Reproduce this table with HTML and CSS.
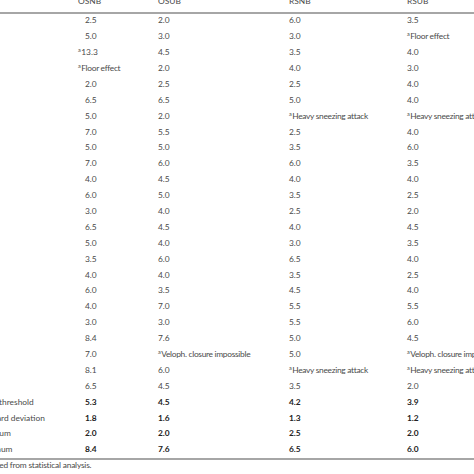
FILE: index.html
```html
<!DOCTYPE html>
<html lang="en">
<head>
<meta charset="utf-8">
<title>Nasal threshold table</title>
<link rel="stylesheet" href="styles.css">
</head>
<body>
<div class="sheet">
  <div class="row head">
    <div class="c lab"></div>
    <div class="c v2 nopad">OSNB</div>
    <div class="c">OSUB</div>
    <div class="c">RSNB</div>
    <div class="c">RSUB</div>
  </div>
  <div class="body">
    <div class="row"><div class="c lab">1</div><div class="c v2">2.5</div><div class="c">2.0</div><div class="c">6.0</div><div class="c">3.5</div></div>
    <div class="row"><div class="c lab">2</div><div class="c v2">5.0</div><div class="c">3.0</div><div class="c">3.0</div><div class="c txt"><sup class="fn">a</sup>Floor effect</div></div>
    <div class="row"><div class="c lab">3</div><div class="c v2 nopad"><sup class="fn">a</sup>13.3</div><div class="c">4.5</div><div class="c">3.5</div><div class="c">4.0</div></div>
    <div class="row"><div class="c lab">4</div><div class="c v2 nopad txt"><sup class="fn">a</sup>Floor effect</div><div class="c">2.0</div><div class="c">4.0</div><div class="c">3.0</div></div>
    <div class="row"><div class="c lab">5</div><div class="c v2">2.0</div><div class="c">2.5</div><div class="c">2.5</div><div class="c">4.0</div></div>
    <div class="row"><div class="c lab">6</div><div class="c v2">6.5</div><div class="c">6.5</div><div class="c">5.0</div><div class="c">4.0</div></div>
    <div class="row"><div class="c lab">7</div><div class="c v2">5.0</div><div class="c">2.0</div><div class="c txt"><sup class="fn">a</sup>Heavy sneezing attack</div><div class="c txt"><sup class="fn">a</sup>Heavy sneezing attack</div></div>
    <div class="row"><div class="c lab">8</div><div class="c v2">7.0</div><div class="c">5.5</div><div class="c">2.5</div><div class="c">4.0</div></div>
    <div class="row"><div class="c lab">9</div><div class="c v2">5.0</div><div class="c">5.0</div><div class="c">3.5</div><div class="c">6.0</div></div>
    <div class="row"><div class="c lab">10</div><div class="c v2">7.0</div><div class="c">6.0</div><div class="c">6.0</div><div class="c">3.5</div></div>
    <div class="row"><div class="c lab">11</div><div class="c v2">4.0</div><div class="c">4.5</div><div class="c">4.0</div><div class="c">4.0</div></div>
    <div class="row"><div class="c lab">12</div><div class="c v2">6.0</div><div class="c">5.0</div><div class="c">3.5</div><div class="c">2.5</div></div>
    <div class="row"><div class="c lab">13</div><div class="c v2">3.0</div><div class="c">4.0</div><div class="c">2.5</div><div class="c">2.0</div></div>
    <div class="row"><div class="c lab">14</div><div class="c v2">6.5</div><div class="c">4.5</div><div class="c">4.0</div><div class="c">4.5</div></div>
    <div class="row"><div class="c lab">15</div><div class="c v2">5.0</div><div class="c">4.0</div><div class="c">3.0</div><div class="c">3.5</div></div>
    <div class="row"><div class="c lab">16</div><div class="c v2">3.5</div><div class="c">6.0</div><div class="c">6.5</div><div class="c">4.0</div></div>
    <div class="row"><div class="c lab">17</div><div class="c v2">4.0</div><div class="c">4.0</div><div class="c">3.5</div><div class="c">2.5</div></div>
    <div class="row"><div class="c lab">18</div><div class="c v2">6.0</div><div class="c">3.5</div><div class="c">4.5</div><div class="c">4.0</div></div>
    <div class="row"><div class="c lab">19</div><div class="c v2">4.0</div><div class="c">7.0</div><div class="c">5.5</div><div class="c">5.5</div></div>
    <div class="row"><div class="c lab">20</div><div class="c v2">3.0</div><div class="c">3.0</div><div class="c">5.5</div><div class="c">6.0</div></div>
    <div class="row"><div class="c lab">21</div><div class="c v2">8.4</div><div class="c">7.6</div><div class="c">5.0</div><div class="c">4.5</div></div>
    <div class="row"><div class="c lab">22</div><div class="c v2">7.0</div><div class="c txt"><sup class="fn">a</sup>Veloph. closure impossible</div><div class="c">5.0</div><div class="c txt"><sup class="fn">a</sup>Veloph. closure impossible</div></div>
    <div class="row"><div class="c lab">23</div><div class="c v2">8.1</div><div class="c">6.0</div><div class="c txt"><sup class="fn">a</sup>Heavy sneezing attack</div><div class="c txt"><sup class="fn">a</sup>Heavy sneezing attack</div></div>
    <div class="row"><div class="c lab">24</div><div class="c v2">6.5</div><div class="c">4.5</div><div class="c">3.5</div><div class="c">2.0</div></div>
    <div class="row sum"><div class="c lab">Mean threshold</div><div class="c v2">5.3</div><div class="c">4.5</div><div class="c">4.2</div><div class="c">3.9</div></div>
    <div class="row sum"><div class="c lab">Standard deviation</div><div class="c v2">1.8</div><div class="c">1.6</div><div class="c">1.3</div><div class="c">1.2</div></div>
    <div class="row sum"><div class="c lab">Minimum</div><div class="c v2">2.0</div><div class="c">2.0</div><div class="c">2.5</div><div class="c">2.0</div></div>
    <div class="row sum last"><div class="c lab">Maximum</div><div class="c v2">8.4</div><div class="c">7.6</div><div class="c">6.5</div><div class="c">6.0</div></div>
  </div>
  <p class="note"><sup class="fn">a</sup>Excluded from statistical analysis.</p>
</div>
</body>
</html>
```

FILE: styles.css
```css
html, body {
  margin: 0;
  padding: 0;
  background: #ffffff;
  overflow: hidden;
}

body {
  font-family: Lato, "Open Sans", sans-serif;
  font-size: 8.4px;
  color: #4a4a4a;
}

.sheet {
  width: 560px;
  margin: -5.2px 0 0 -24px;
}

.row {
  display: grid;
  grid-template-columns: 102px 80px 131px 118px 129px;
  height: 15.9px;
  line-height: 12px;
  white-space: nowrap;
}

.row.head {
  height: 17.5px;
  border-bottom: 2px solid #a6a6a6;
  box-sizing: content-box;
}

.c {
  overflow: visible;
}

.txt {
  letter-spacing: -0.3px;
}

.v2 {
  padding-left: 7px;
}

.v2.nopad {
  padding-left: 0;
}

.row.sum .c:not(.lab) {
  font-weight: 700;
  color: #222222;
}

.row.last {
  height: 15px;
  border-bottom: 2px solid #a6a6a6;
  box-sizing: content-box;
}

.fn {
  font-size: 5.5px;
  line-height: 0;
  vertical-align: 3px;
  margin-right: 0.5px;
  letter-spacing: 0;
}

.note {
  margin: -1.5px 0 0 -3px;
  line-height: 12px;
  letter-spacing: -0.2px;
}
```
